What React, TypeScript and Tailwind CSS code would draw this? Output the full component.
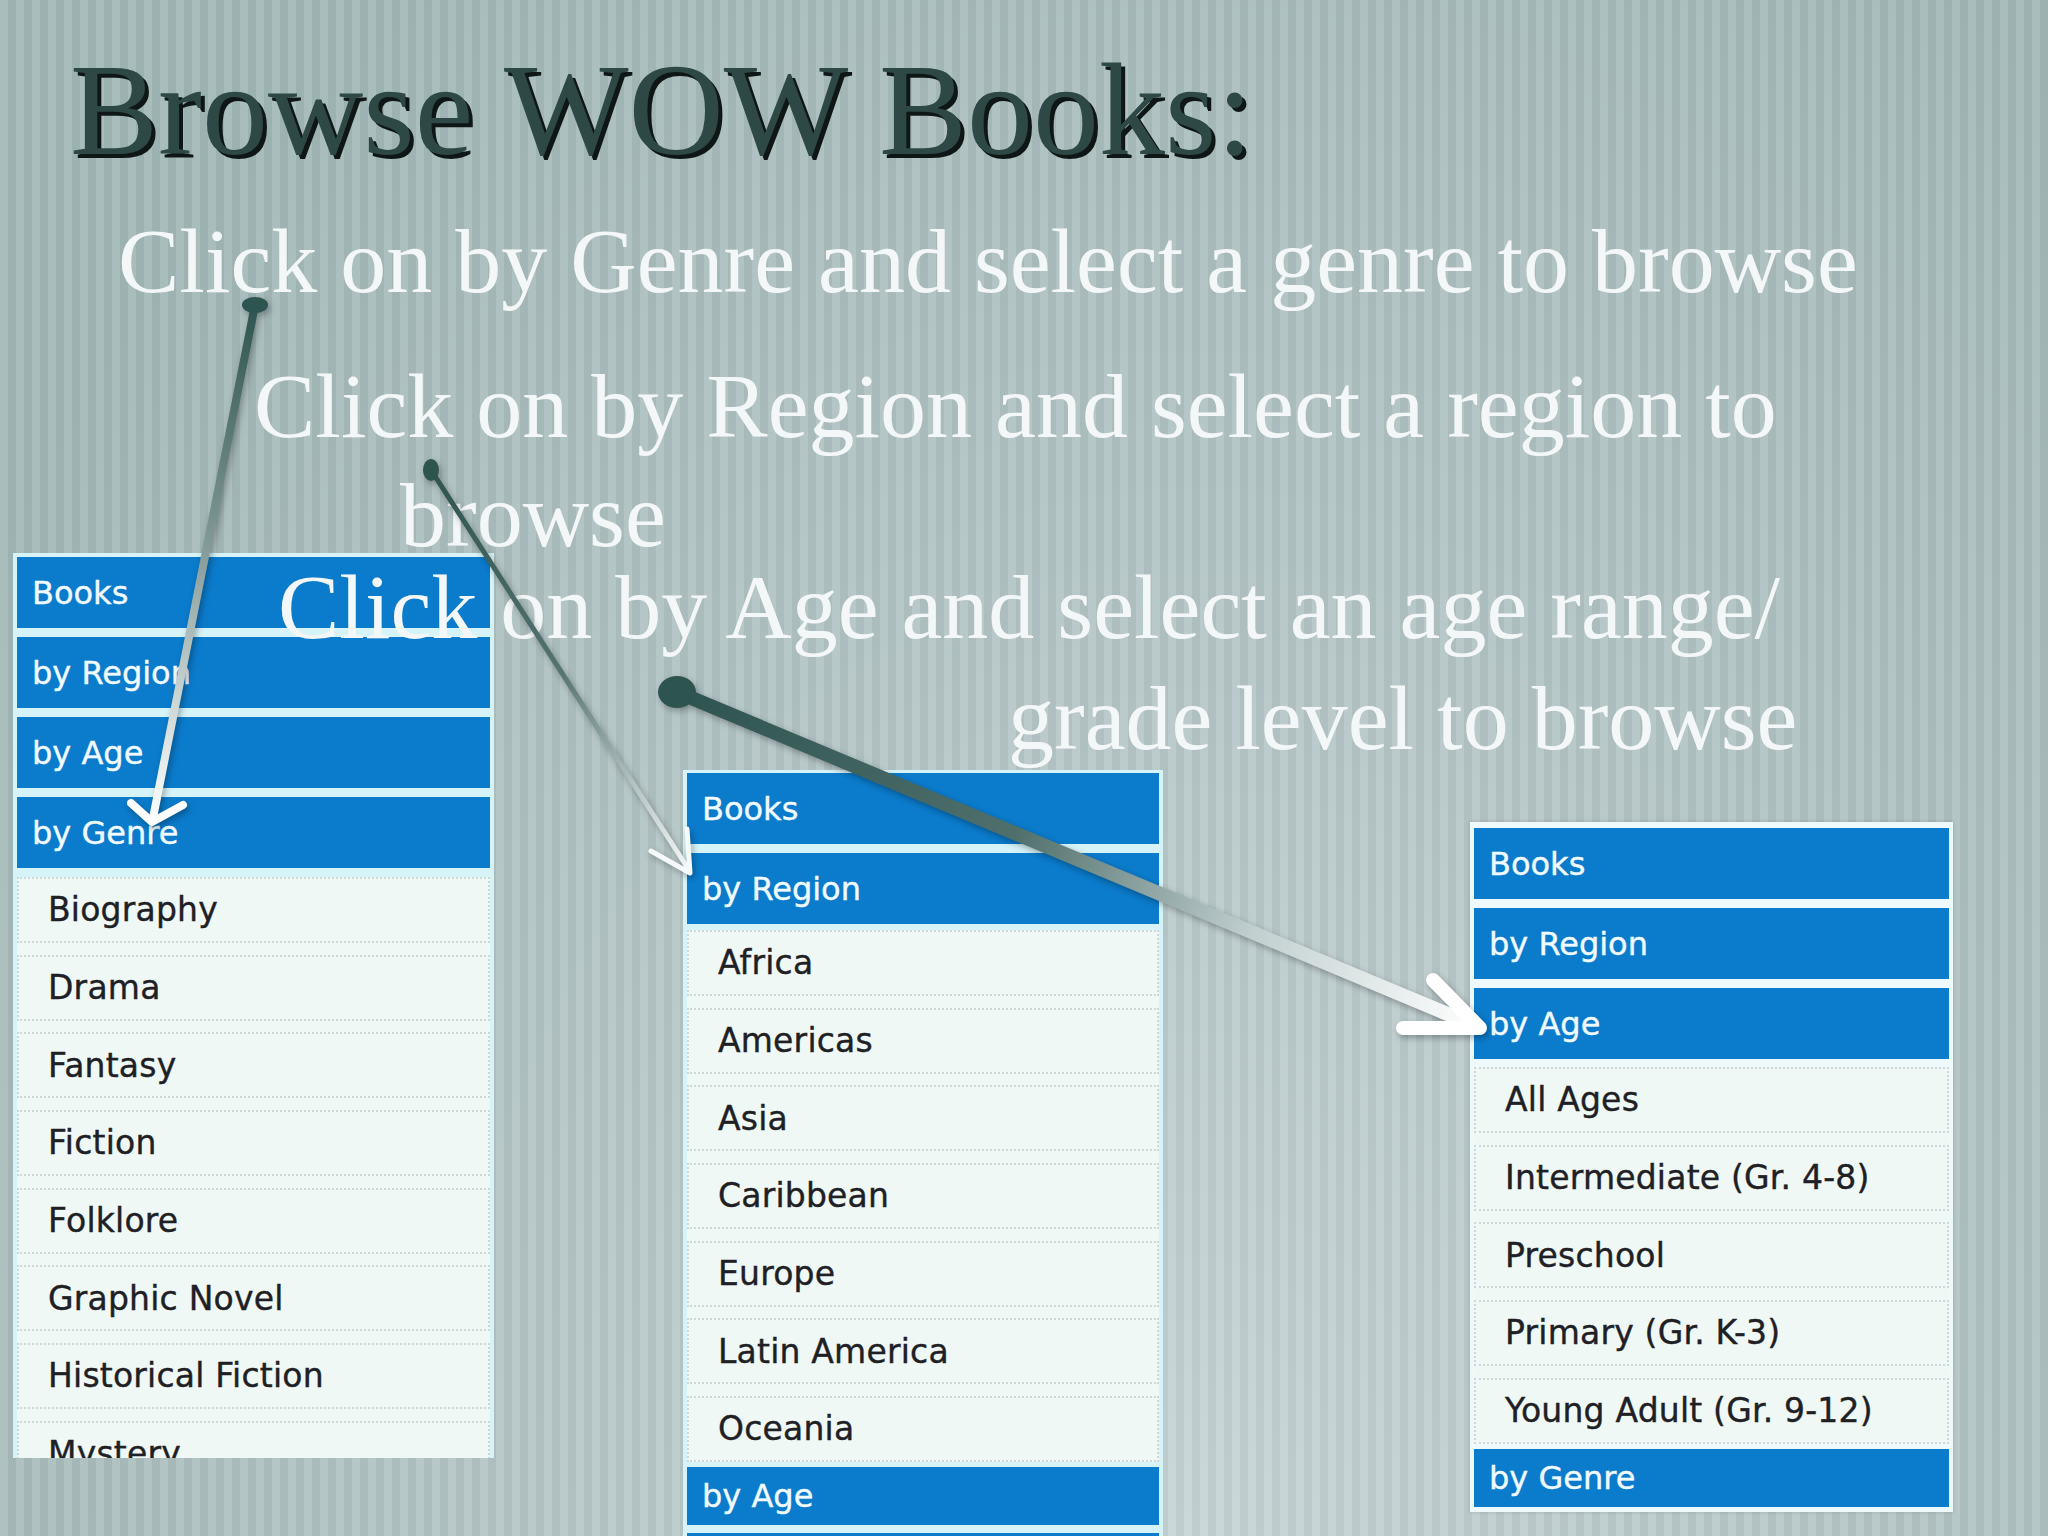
import React from "react";

type MenuProps = {
  heads: string[];
  items: string[];
  tail?: string[];
  className: string;
  listGap: string;
};

function Menu({ heads, items, tail = [], className, listGap }: MenuProps) {
  return (
    <div
      className={`flex shrink-0 flex-col overflow-hidden px-[4px] font-['DejaVu_Sans','Verdana',sans-serif] [-webkit-text-stroke:0.4px_currentColor] ${className}`}
    >
      {heads.map((h, i) => (
        <div
          key={h}
          className={`flex h-[71px] shrink-0 items-center bg-[#0b7bcb] pl-[15px] text-[32px] text-[#f1fbff] ${
            i ? "mt-[9px]" : ""
          }`}
        >
          {h}
        </div>
      ))}
      <div className={`flex shrink-0 flex-col gap-[11.7px] bg-[#eef8f5] ${listGap}`}>
        {items.map((it) => (
          <div
            key={it}
            className="flex h-[66px] shrink-0 items-center border-2 border-dotted border-[#cdd9d6] bg-[#eff8f5] pl-[29px] text-[33px] tracking-[0.2px] text-[#1f1f26]"
          >
            {it}
          </div>
        ))}
      </div>
      {tail.map((t, i) => (
        <div
          key={t || `tail-${i}`}
          className={`flex h-[58px] shrink-0 items-start bg-[#0b7bcb] pl-[15px] pt-[5px] text-[32px] text-[#f1fbff] ${
            i ? "mt-[8px]" : "mt-[5px]"
          }`}
        >
          {t}
        </div>
      ))}
    </div>
  );
}

function Arrows() {
  return (
    <svg
      className="pointer-events-none absolute left-0 top-0 drop-shadow-[2px_3px_3px_rgba(0,0,0,0.3)]"
      width="2048"
      height="1536"
      viewBox="0 0 2048 1536"
    >
      <defs>
        <linearGradient id="ga" gradientUnits="userSpaceOnUse" x1="255" y1="305" x2="152" y2="823">
          <stop offset="0" stopColor="#2e5450" />
          <stop offset="0.45" stopColor="#7f9795" />
          <stop offset="0.78" stopColor="#cfd9d8" />
          <stop offset="1" stopColor="#ffffff" />
        </linearGradient>
        <linearGradient id="gb" gradientUnits="userSpaceOnUse" x1="431" y1="470" x2="690" y2="873">
          <stop offset="0" stopColor="#2e5450" />
          <stop offset="0.5" stopColor="#557370" />
          <stop offset="0.8" stopColor="#b9c8c7" />
          <stop offset="1" stopColor="#f6f9f9" />
        </linearGradient>
        <linearGradient id="gc" gradientUnits="userSpaceOnUse" x1="677" y1="692" x2="1480" y2="1028">
          <stop offset="0" stopColor="#2e5450" />
          <stop offset="0.42" stopColor="#4f6f6b" />
          <stop offset="0.72" stopColor="#c2d0d0" />
          <stop offset="1" stopColor="#ffffff" />
        </linearGradient>
      </defs>

      <line x1="255" y1="305" x2="153" y2="818" stroke="url(#ga)" strokeWidth="8" strokeLinecap="round" />
      <polyline
        points="131,803 152,822 183,805"
        fill="none"
        stroke="#ffffff"
        strokeWidth="8"
        strokeLinecap="round"
        strokeLinejoin="round"
      />
      <ellipse cx="255" cy="305" rx="13" ry="8" fill="#2e5450" />

      <line x1="431" y1="470" x2="689" y2="870" stroke="url(#gb)" strokeWidth="5" strokeLinecap="round" />
      <polyline
        points="651,851 690,873 687,829"
        fill="none"
        stroke="#f6f9f9"
        strokeWidth="5"
        strokeLinecap="round"
        strokeLinejoin="round"
      />
      <ellipse cx="431" cy="470" rx="8" ry="11" fill="#2e5450" />

      <line x1="677" y1="692" x2="1474" y2="1025" stroke="url(#gc)" strokeWidth="14" strokeLinecap="round" />
      <polyline
        points="1433,980 1480,1028 1403,1028"
        fill="none"
        stroke="#ffffff"
        strokeWidth="14"
        strokeLinecap="round"
        strokeLinejoin="round"
      />
      <ellipse cx="677" cy="692" rx="19" ry="16" fill="#2e5450" />
    </svg>
  );
}

export default function App() {
  const serif = "font-['Liberation_Serif','Times_New_Roman',serif]";
  return (
    <div className="relative h-[1536px] w-[2048px] overflow-hidden [background-image:repeating-linear-gradient(90deg,rgba(255,255,255,0.07)_0px,rgba(255,255,255,0.07)_8px,rgba(0,0,0,0.035)_8px,rgba(0,0,0,0.035)_16px),radial-gradient(ellipse_at_58%_100%,#c7d4d6_0%,#b5c6c7_40%,#a2b8b6_85%)]">
      <div className="flex items-start pl-[13px]">
        <Menu
          className="mt-[553px] h-[905px] w-[481px] bg-[#d6f3f8] pt-[4px]"
          listGap="mt-[9px]"
          heads={["Books", "by Region", "by Age", "by Genre"]}
          items={[
            "Biography",
            "Drama",
            "Fantasy",
            "Fiction",
            "Folklore",
            "Graphic Novel",
            "Historical Fiction",
            "Mystery",
          ]}
        />
        <Menu
          className="ml-[189px] mt-[770px] w-[480px] bg-[#d6f3f8] pt-[3px]"
          listGap="mt-[6px]"
          heads={["Books", "by Region"]}
          items={["Africa", "Americas", "Asia", "Caribbean", "Europe", "Latin America", "Oceania"]}
          tail={["by Age", ""]}
        />
        <Menu
          className="ml-[307px] mt-[822px] w-[483px] bg-[#eef9fb] pb-[5px] pt-[6px] shadow-[0_0_4px_rgba(0,0,0,0.15)]"
          listGap="mt-[8px]"
          heads={["Books", "by Region", "by Age"]}
          items={["All Ages", "Intermediate (Gr. 4-8)", "Preschool", "Primary (Gr. K-3)", "Young Adult (Gr. 9-12)"]}
          tail={["by Genre"]}
        />
      </div>

      <h1
        className={`absolute left-[70px] top-[44px] whitespace-nowrap text-[132px] font-normal leading-none text-[#2e4845] [text-shadow:4px_4px_0_#0e1716] ${serif}`}
      >
        Browse WOW Books:
      </h1>

      <div className={`text-[92px] leading-none text-[#f4f7f7] ${serif}`}>
        <p className="absolute left-[118px] top-[215px] whitespace-nowrap">
          Click on by Genre and select a genre to browse
        </p>
        <p className="absolute left-[254px] top-[360px] whitespace-nowrap">
          Click on by Region and select a region to
        </p>
        <p className="absolute left-[400px] top-[469px] whitespace-nowrap">browse</p>
        <p className="absolute left-[278px] top-[561px] whitespace-nowrap">
          Click on by Age and select an age range/
        </p>
        <p className="absolute left-[1008px] top-[672px] whitespace-nowrap">grade level to browse</p>
      </div>

      <Arrows />
    </div>
  );
}
